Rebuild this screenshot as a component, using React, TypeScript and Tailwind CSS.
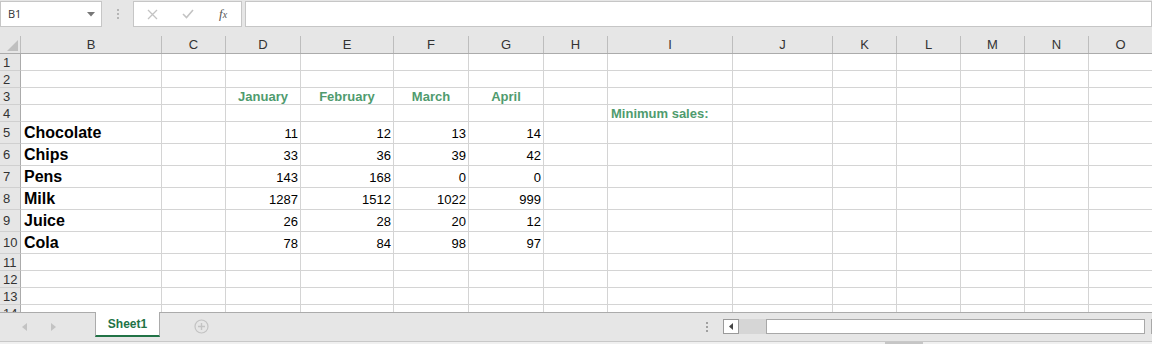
import React from "react";

type Col = { l: string; w: string };
const cols: Col[] = [
  { l: "B", w: "w-[141px]" },
  { l: "C", w: "w-[64px]" },
  { l: "D", w: "w-[75px]" },
  { l: "E", w: "w-[93px]" },
  { l: "F", w: "w-[75px]" },
  { l: "G", w: "w-[75px]" },
  { l: "H", w: "w-[64px]" },
  { l: "I", w: "w-[125px]" },
  { l: "J", w: "w-[100px]" },
  { l: "K", w: "w-[64px]" },
  { l: "L", w: "w-[64px]" },
  { l: "M", w: "w-[64px]" },
  { l: "N", w: "w-[64px]" },
  { l: "O", w: "w-[64px]" },
];

const months: Record<string, string> = { D: "January", E: "February", F: "March", G: "April" };
const products: [string, number[]][] = [
  ["Chocolate", [11, 12, 13, 14]],
  ["Chips", [33, 36, 39, 42]],
  ["Pens", [143, 168, 0, 0]],
  ["Milk", [1287, 1512, 1022, 999]],
  ["Juice", [26, 28, 20, 12]],
  ["Cola", [78, 84, 98, 97]],
];

function cellContent(r: number, c: string) {
  if (r === 3 && months[c]) {
    return (
      <span className="w-full text-center text-[13px] leading-[15px] font-bold text-[#4f9b6e]">{months[c]}</span>
    );
  }
  if (r === 4 && c === "I") {
    return (
      <span className="pl-[3px] text-[13px] leading-[15px] font-bold text-[#4f9b6e] whitespace-nowrap">Minimum sales:</span>
    );
  }
  if (r >= 5 && r <= 10) {
    const p = products[r - 5];
    if (c === "B") {
      return <span className="pl-[3px] pb-[1px] text-[16px] leading-[18px] font-bold text-black">{p[0]}</span>;
    }
    const idx = ["D", "E", "F", "G"].indexOf(c);
    if (idx >= 0) {
      return (
        <span className="w-full text-right pr-[2px] pb-[2px] text-[13px] leading-[15px] text-black">{p[1][idx]}</span>
      );
    }
  }
  return null;
}

export default function App() {
  const rows = Array.from({ length: 14 }, (_, i) => i + 1);
  return (
    <div className="w-[1152px] h-[344px] overflow-hidden bg-[#e6e6e6] flex flex-col font-['Liberation_Sans',Arial,sans-serif]">
      {/* Formula bar */}
      <div className="h-[36px] shrink-0 flex items-start pt-[1px]">
        <div className="w-[102px] h-[26px] bg-white border border-[#c6c6c6] flex items-center justify-between pl-[7px] pr-[6px]">
          <span className="text-[11px] text-[#333] font-['Open_Sans',sans-serif]">B1</span>
          <svg width="8" height="5" viewBox="0 0 8 5"><path d="M0 0 L8 0 L4 4.5 Z" fill="#777" /></svg>
        </div>
        <div className="w-[31px] h-[26px] flex flex-col items-center justify-center gap-[2px]">
          <div className="w-[2px] h-[2px] bg-[#b5b5b5]" />
          <div className="w-[2px] h-[2px] bg-[#b5b5b5]" />
          <div className="w-[2px] h-[2px] bg-[#b5b5b5]" />
        </div>
        <div className="w-[109px] h-[26px] bg-white border border-[#c6c6c6] flex items-center">
          <div className="w-[36px] flex justify-center pl-[1px]">
            <svg width="11" height="11" viewBox="0 0 11 11"><path d="M1 1 L10 10 M10 1 L1 10" stroke="#c3c3c3" strokeWidth="1.3" /></svg>
          </div>
          <div className="w-[36px] flex justify-center">
            <svg width="12" height="10" viewBox="0 0 12 10"><path d="M1 5 L4.5 8.5 L11 1" stroke="#c3c3c3" strokeWidth="1.6" fill="none" /></svg>
          </div>
          <div className="w-[36px] flex justify-center">
            <span className="text-[13px] italic text-[#555] font-['Liberation_Serif',serif]">f<span className="text-[10px]">x</span></span>
          </div>
        </div>
        <div className="ml-[3px] flex-1 h-[26px] bg-white border border-[#c6c6c6]" />
      </div>

      {/* Grid */}
      <div className="h-[276px] shrink-0 overflow-hidden bg-white flex flex-col">
        <div className="h-[18px] shrink-0 flex bg-[#e6e6e6] border-b border-[#ababab]">
          <div className="w-[21px] shrink-0 h-full border-r border-[#bdbdbd] relative">
            <svg className="absolute right-[2px] bottom-[2px]" width="11" height="11" viewBox="0 0 11 11"><path d="M11 0 L11 11 L0 11 Z" fill="#bfbfbf" /></svg>
          </div>
          {cols.map((c) => (
            <div key={c.l} className={`${c.w} shrink-0 h-full border-r border-[#bdbdbd] flex items-center justify-center text-[13px] text-[#333]`}>
              {c.l}
            </div>
          ))}
        </div>
        {rows.map((r) => {
          const h = r >= 5 && r <= 10 ? "h-[22px]" : "h-[17px]";
          return (
            <div key={r} className={`${h} shrink-0 flex`}>
              <div className="w-[21px] shrink-0 h-full bg-[#e6e6e6] border-r border-b border-r-[#ababab] border-b-[#d0d0d0] flex items-center pl-[3px] text-[13px] leading-[15px] text-[#333]">
                {r}
              </div>
              {cols.map((c) => (
                <div key={c.l} className={`${c.w} shrink-0 h-full border-r border-b border-[#d4d4d4] flex items-end overflow-visible`}>
                  {cellContent(r, c.l)}
                </div>
              ))}
            </div>
          );
        })}
      </div>

      {/* Tab bar */}
      <div className="h-[29px] shrink-0 flex items-start border-t border-[#ababab] bg-[#e6e6e6]">
        <div className="w-[95px] shrink-0 h-[27px] flex items-center">
          <div className="w-[48px] flex justify-center">
            <svg width="5" height="8" viewBox="0 0 5 8"><path d="M5 0 L5 8 L0 4 Z" fill="#c3c3c3" /></svg>
          </div>
          <div className="w-[10px] flex justify-center">
            <svg width="5" height="8" viewBox="0 0 5 8"><path d="M0 0 L0 8 L5 4 Z" fill="#c3c3c3" /></svg>
          </div>
        </div>
        <div className="w-[65px] shrink-0 h-[25px] bg-white border-l border-r border-[#ababab] border-b-2 border-b-[#217346] flex items-center justify-center -mt-[1px]">
          <span className="text-[12px] font-bold text-[#217346] pt-[1px]">Sheet1</span>
        </div>
        <div className="w-[82px] shrink-0 h-[27px] flex items-center justify-center">
          <svg width="15" height="15" viewBox="0 0 15 15">
            <circle cx="7.5" cy="7.5" r="6.5" fill="none" stroke="#c3c3c3" strokeWidth="1.2" />
            <path d="M7.5 4 L7.5 11 M4 7.5 L11 7.5" stroke="#c3c3c3" strokeWidth="1.4" />
          </svg>
        </div>
        <div className="flex-1" />
        <div className="w-[16px] shrink-0 h-[27px] flex flex-col items-center justify-center gap-[2px] mr-[8px]">
          <div className="w-[2px] h-[2px] bg-[#a0a0a0]" />
          <div className="w-[2px] h-[2px] bg-[#a0a0a0]" />
          <div className="w-[2px] h-[2px] bg-[#a0a0a0]" />
        </div>
        <div className="mt-[6px] flex h-[15px] shrink-0 -mr-[9px]">
          <div className="w-[16px] h-[15px] bg-white border border-[#9a9a9a] flex items-center justify-center">
            <svg width="4" height="7" viewBox="0 0 4 7"><path d="M4 0 L4 7 L0 3.5 Z" fill="#444" /></svg>
          </div>
          <div className="w-[27px] h-[15px] bg-[#d6d6d6]" />
          <div className="w-[379px] h-[15px] bg-white border border-[#a8a8a8]" />
          <div className="w-[6px]" />
          <div className="w-[10px] h-[15px] bg-white border border-[#a8a8a8]" />
        </div>
      </div>
      <div className="h-[4px] shrink-0 bg-[#f0f0f0] border-t border-[#c8c8c8] flex">
        <div className="ml-[885px] w-[38px] h-full bg-[#c6c6c6]" />
      </div>
    </div>
  );
}
